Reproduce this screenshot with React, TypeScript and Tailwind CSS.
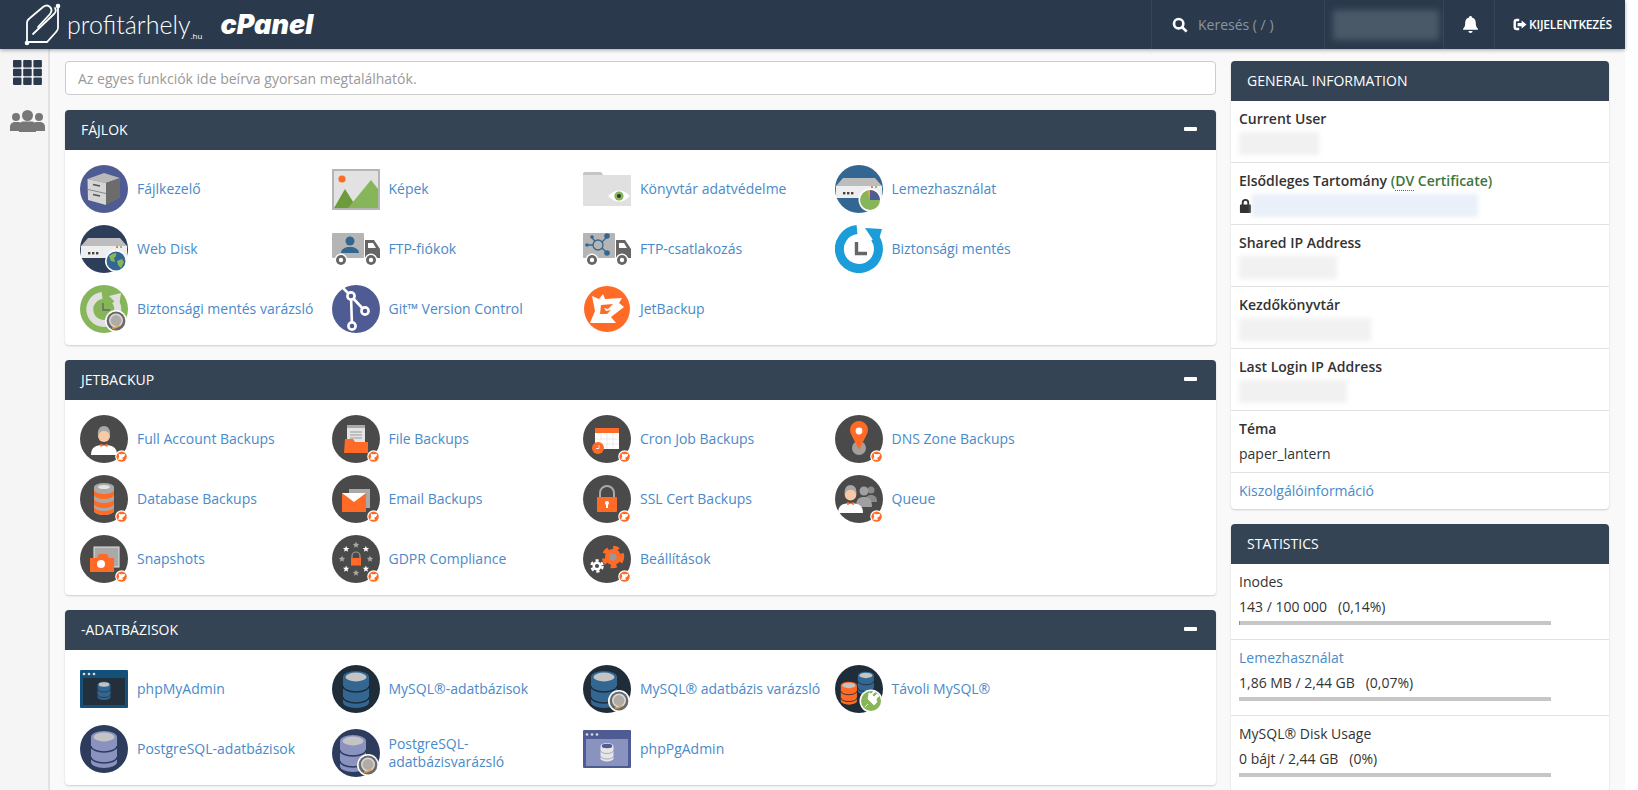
import type { ReactNode } from "react";

const ORANGE = "#ff6b26";
const DARK = "#4a4a4a";
const NAVY = "#1f2d3a";
const BLUE = "#336791";
const PURPLE = "#4f5b93";
const GREEN = "#87b55a";

function Icon({ children }: { children: ReactNode }) {
  return (
    <svg viewBox="0 0 48 48" className="w-12 h-12 shrink-0">
      {children}
    </svg>
  );
}

function Disc({ color }: { color: string }) {
  return <circle cx="24" cy="24" r="24" fill={color} />;
}

function JetBadge() {
  return (
    <g>
      <circle cx="41.6" cy="41.6" r="6.4" fill="#fff" />
      <circle cx="41.6" cy="41.6" r="5.2" fill={ORANGE} />
      <path d="M38 44.8l1.2-3.4-.6-3 2 .9 4.6-.3-.7 2.3-2.4 1.7 1.1 1.8z" fill="#fff" />
    </g>
  );
}

function HeadsetBadge() {
  return (
    <g>
      <circle cx="36" cy="36" r="11" fill="#fff" />
      <circle cx="36" cy="36" r="9.4" fill="#6a6a6a" />
      <circle cx="36" cy="35.5" r="6.2" fill="#b0aca5" stroke="#d9d9d9" strokeWidth="1.5" />
      <path d="M32 43q5 0 7-3" fill="none" stroke="#e8a33d" strokeWidth="1.6" />
    </g>
  );
}

function Server({ top = "#bdbdbd" }: { top?: string }) {
  return (
    <g>
      <path d="M8 13h32l7 8H1z" fill={top} />
      <rect x="1" y="21" width="46" height="12" fill="#eee" />
      <rect x="8" y="27" width="2.4" height="2.4" fill="#444" />
      <rect x="12" y="27" width="2.4" height="2.4" fill="#444" />
      <rect x="16" y="27" width="2.4" height="2.4" fill="#444" />
      <circle cx="37" cy="22" r="1" fill="#e5533d" />
      <circle cx="41" cy="22" r="1" fill="#6db33f" />
    </g>
  );
}

function Cylinder({ body, cap, line }: { body: string; cap: string; line: string }) {
  return (
    <g>
      <path d="M11 12v25a13 6 0 0 0 26 0V12a13 6 0 0 0-26 0z" fill={body} />
      <ellipse cx="24" cy="12" rx="10.5" ry="4.4" fill={cap} />
      <path d="M11 21a13 6 0 0 0 26 0M11 32a13 6 0 0 0 26 0" fill="none" stroke={line} strokeWidth="1.4" />
    </g>
  );
}

function Truck({ children }: { children: ReactNode }) {
  return (
    <Icon>
      <rect x="0" y="8" width="32" height="25" rx="1" fill="#b5b5b5" />
      <path d="M33 15h9l6 9v9H33z" fill="#666" />
      <path d="M36 18h5l3 5h-8z" fill="#fff" />
      {children}
      <circle cx="9" cy="35" r="6.4" fill="#fff" />
      <circle cx="9" cy="35" r="5" fill="#666" />
      <circle cx="9" cy="35" r="2.2" fill="#fff" />
      <circle cx="39" cy="35" r="6.4" fill="#fff" />
      <circle cx="39" cy="35" r="5" fill="#666" />
      <circle cx="39" cy="35" r="2.2" fill="#fff" />
    </Icon>
  );
}

function Person() {
  return (
    <g>
      <path d="M11 40c0-8 5-10 13-10s13 2 13 10z" fill="#fff" />
      <circle cx="24" cy="21" r="6" fill="#f7c9a7" />
      <path d="M18 21c-1-7 2.5-10 6-10s7 3 6 10c-1-4-3.5-5-6-5s-5 1-6 5z" fill="#a8a8a8" />
      <path d="M20.5 28.5l3.5 1.5 3.5-1.5v3.5l-3.5-1.5-3.5 1.5z" fill={ORANGE} />
    </g>
  );
}

function Star({ cx, cy, fill }: { cx: number; cy: number; fill: string }) {
  const pts = Array.from({ length: 10 }, (_, i) => {
    const r = i % 2 === 0 ? 3.4 : 1.5;
    const a = (i * Math.PI) / 5 - Math.PI / 2;
    return `${cx + r * Math.cos(a)},${cy + r * Math.sin(a)}`;
  }).join(" ");
  return <polygon points={pts} fill={fill} />;
}

function Gear({ cx, cy, r, color, hole }: { cx: number; cy: number; r: number; color: string; hole: string }) {
  return (
    <g>
      <circle cx={cx} cy={cy} r={r + 1} fill="none" stroke={color} strokeWidth={r * 0.55} strokeDasharray={`${r * 0.7} ${r * 0.62}`} />
      <circle cx={cx} cy={cy} r={r} fill={color} />
      <circle cx={cx} cy={cy} r={r * 0.45} fill={hole} />
    </g>
  );
}

const icons: Record<string, ReactNode> = {
  files: (
    <Icon>
      <Disc color={PURPLE} />
      <path d="M7.5 14L24 8l16 5-14 5z" fill="#b9b9b9" />
      <path d="M26 18l14-5v20l-14 7z" fill="#6c6c6c" />
      <path d="M7.5 14L26 18v22L8 35z" fill="#d5d5d5" />
      <path d="M8 24.5l18 4" stroke="#8a8a8a" strokeWidth="1" />
      <path d="M13 19.5l7 1.5M13 29.5l7 1.5" stroke="#555" strokeWidth="1.6" />
    </Icon>
  ),
  images: (
    <Icon>
      <rect x="0" y="4" width="48" height="41" fill="#b5b5b5" />
      <rect x="2" y="6" width="44" height="37" rx="1" fill="#e2e2e2" />
      <circle cx="10" cy="14" r="3.6" fill={ORANGE} />
      <path d="M2 43l11-19 12 19z" fill="#6d9b3b" />
      <path d="M16 43l23-28 7 9v19z" fill={GREEN} />
    </Icon>
  ),
  privacy: (
    <Icon>
      <path d="M0 9a2 2 0 0 1 2-2h16l3 4H0z" fill="#c5c5c5" />
      <path d="M0 10h48v31H1a1 1 0 0 1-1-1z" fill="#e0e0e0" />
      <path d="M25 31q11-11 22 0-11 11-22 0z" fill="#fff" />
      <circle cx="36" cy="31" r="4.6" fill={GREEN} />
      <circle cx="36" cy="31" r="2" fill="#333" />
    </Icon>
  ),
  disk: (
    <Icon>
      <Disc color={BLUE} />
      <Server />
      <circle cx="35" cy="35" r="11.5" fill="#fff" />
      <circle cx="35" cy="35" r="10" fill={GREEN} />
      <path d="M35 35V25a10 10 0 0 1 10 10z" fill={PURPLE} />
      <path d="M35 35l-3-9.5a10 10 0 0 1 3-.5z" fill="#e8a33d" />
    </Icon>
  ),
  webdisk: (
    <Icon>
      <Disc color="#2c3e5a" />
      <Server />
      <circle cx="36" cy="36" r="11" fill="#fff" />
      <circle cx="36" cy="36" r="9.5" fill={BLUE} />
      <path d="M29 31q4-3 7-3 1 3-2 5l1 4-4-1zM37 36l5-2 2 3-3 6-3-3z" fill={GREEN} />
    </Icon>
  ),
  ftpUser: (
    <Truck>
      <circle cx="18" cy="16" r="4.5" fill={BLUE} />
      <path d="M9 28c0-4 4-5 6-6h6c2 1 6 2 6 6z" fill={BLUE} />
    </Truck>
  ),
  ftpConn: (
    <Truck>
      <g fill="none" stroke={BLUE} strokeWidth="1.3">
        <circle cx="15" cy="20" r="5" />
        <path d="M4 20h6M19 17l5-5M19 23l5 5M9 13l3 3" />
      </g>
      <g fill={BLUE}>
        <circle cx="4" cy="20" r="1.8" />
        <circle cx="24" cy="11" r="2.8" />
        <circle cx="24" cy="28" r="2.8" />
        <circle cx="9" cy="12" r="1.8" />
      </g>
    </Truck>
  ),
  backup: (
    <Icon>
      <path d="M22 4.6A19.5 19.5 0 1 0 40 13" fill="none" stroke="#1b9dd9" strokeWidth="9" />
      <polygon points="30,3 47,4 42,21" fill="#1b9dd9" />
      <path d="M21.5 17v11.5H32" fill="none" stroke="#666" strokeWidth="3.4" />
    </Icon>
  ),
  wizard: (
    <Icon>
      <Disc color={GREEN} />
      <path d="M22 10.5A14 14 0 1 0 35 16" fill="none" stroke="#e0e0e0" strokeWidth="7" />
      <polygon points="29,11 41,8 39,21" fill="#e0e0e0" />
      <path d="M23 18v7h7" fill="none" stroke="#666" strokeWidth="1.4" />
      <HeadsetBadge />
    </Icon>
  ),
  git: (
    <Icon>
      <Disc color={PURPLE} />
      <g stroke="#fff" strokeWidth="2.6" fill="none">
        <path d="M11 3l8 8 14 15M19 11l1 30" />
      </g>
      <g stroke="#fff" strokeWidth="2.6" fill={PURPLE}>
        <circle cx="19" cy="11" r="3.6" />
        <circle cx="33" cy="26" r="3.6" />
        <circle cx="20" cy="41" r="3.6" />
      </g>
    </Icon>
  ),
  jet: (
    <Icon>
      <circle cx="24" cy="24" r="23" fill={ORANGE} />
      <path d="M7 38l5-12-3-15 7 3 4-5 2 5 17-1-3 5 5 4-13 10 5 6z" fill="#fff" />
      <path d="M18 20l12-1-5 5-4-1 2 3 5-1-4 4h-7z" fill={ORANGE} />
    </Icon>
  ),
  fullBackup: (
    <Icon>
      <Disc color={DARK} />
      <Person />
      <JetBadge />
    </Icon>
  ),
  fileBackup: (
    <Icon>
      <Disc color={DARK} />
      <rect x="15" y="10" width="18" height="5" fill="#aaa" />
      <rect x="15" y="13" width="18" height="16" fill="#e4e4e4" />
      <path d="M18 17h12M18 20h12M18 23h12" stroke="#999" />
      <path d="M13 24h8l2 3h13v11H12z" fill={ORANGE} />
      <JetBadge />
    </Icon>
  ),
  cronBackup: (
    <Icon>
      <Disc color={DARK} />
      <rect x="12" y="13" width="24" height="21" fill="#fff" />
      <rect x="12" y="13" width="24" height="5" fill={ORANGE} />
      <path d="M12 24h24M12 29h24M18 18v16M24 18v16M30 18v16" stroke="#ddd" strokeWidth=".6" />
      <circle cx="15" cy="33" r="6" fill={ORANGE} />
      <path d="M16 30v3.5h-3" fill="none" stroke="#fff" strokeWidth=".8" />
      <JetBadge />
    </Icon>
  ),
  dnsBackup: (
    <Icon>
      <Disc color={DARK} />
      <circle cx="24" cy="33" r="7" fill="#a0a0a0" />
      <path d="M24 35L16.5 20a9 9 0 1 1 15 0z" fill={ORANGE} />
      <circle cx="24" cy="16" r="3.4" fill="#fff" />
      <JetBadge />
    </Icon>
  ),
  dbBackup: (
    <Icon>
      <Disc color={DARK} />
      <path d="M14 12a10 4 0 0 1 20 0v24a10 4 0 0 1-20 0z" fill="#a9a9a9" />
      <ellipse cx="24" cy="12" rx="6" ry="2" fill="#e4e4e4" />
      <path d="M14 15a10 4 0 0 0 20 0v5a10 4 0 0 1-20 0zM14 24a10 4 0 0 0 20 0v5a10 4 0 0 1-20 0zM14 32a10 4 0 0 0 20 0v4a10 4 0 0 1-20 0z" fill={ORANGE} />
      <JetBadge />
    </Icon>
  ),
  emailBackup: (
    <Icon>
      <Disc color={DARK} />
      <rect x="17" y="14" width="21" height="19" fill="#a9a9a9" />
      <rect x="10" y="18" width="24" height="19" fill={ORANGE} />
      <path d="M10 18h24L22 27z" fill="#fff" />
      <JetBadge />
    </Icon>
  ),
  sslBackup: (
    <Icon>
      <Disc color={DARK} />
      <path d="M17 24v-6a7 7 0 0 1 14 0v6" fill="none" stroke="#a9a9a9" strokeWidth="2" />
      <rect x="14" y="22" width="20" height="15" rx="1" fill={ORANGE} />
      <circle cx="24" cy="28" r="2" fill="#fff" />
      <rect x="23" y="28" width="2" height="5" fill="#fff" />
      <JetBadge />
    </Icon>
  ),
  queue: (
    <Icon>
      <Disc color={DARK} />
      <circle cx="36" cy="15" r="3.5" fill="#8a8a8a" />
      <path d="M30 27c0-5 2-7 6-7s6 2 6 7z" fill="#8a8a8a" />
      <circle cx="29" cy="16" r="4.5" fill="#a0a0a0" />
      <path d="M21 32c0-8 3-10 8-10s8 2 8 10z" fill="#a0a0a0" />
      <g transform="translate(-7.5 -.5) scale(.96)">
        <Person />
      </g>
      <JetBadge />
    </Icon>
  ),
  snapshot: (
    <Icon>
      <Disc color={DARK} />
      <rect x="14" y="12" width="25" height="20" fill="#a9a9a9" stroke="#e4e4e4" strokeWidth="1" />
      <path d="M10 23h7l2-4h8l2 4h5v14H10z" fill={ORANGE} />
      <circle cx="21" cy="29" r="4" fill="#fff" />
      <JetBadge />
    </Icon>
  ),
  gdpr: (
    <Icon>
      <Disc color={DARK} />
      {Array.from({ length: 8 }, (_, i) => {
        const a = (i * Math.PI) / 4 - Math.PI / 2;
        return <Star key={i} cx={24 + 14 * Math.cos(a)} cy={24 + 14 * Math.sin(a)} fill={i % 2 === 0 ? "#a9a9a9" : "#fff"} />;
      })}
      <path d="M20 24v-3a4 4 0 0 1 8 0v3" fill="none" stroke="#999" strokeWidth="1.2" />
      <rect x="19" y="23" width="10" height="7.5" fill={ORANGE} />
      <JetBadge />
    </Icon>
  ),
  settings: (
    <Icon>
      <Disc color={DARK} />
      <Gear cx={30} cy={22} r={8} color={ORANGE} hole="#999" />
      <Gear cx={14} cy={31} r={4.5} color="#fff" hole={DARK} />
      <JetBadge />
    </Icon>
  ),
  phpMyAdmin: (
    <Icon>
      <rect x="0" y="5" width="48" height="38" rx="1" fill="#14507a" />
      <rect x="3" y="13" width="42" height="27" fill="#23303b" />
      <circle cx="4" cy="9" r="1.3" fill="#ddd" />
      <circle cx="9" cy="9" r="1.3" fill="#ddd" />
      <circle cx="14" cy="9" r="1.3" fill="#ddd" />
      <g transform="translate(12 13.5) scale(.5)">
        <Cylinder body={BLUE} cap="#c4c4c4" line="#23303b" />
      </g>
    </Icon>
  ),
  mysql: (
    <Icon>
      <Disc color={NAVY} />
      <Cylinder body={BLUE} cap="#c4c4c4" line={NAVY} />
    </Icon>
  ),
  mysqlWizard: (
    <Icon>
      <Disc color={NAVY} />
      <g transform="translate(-3 0)">
        <Cylinder body={BLUE} cap="#c4c4c4" line={NAVY} />
      </g>
      <HeadsetBadge />
    </Icon>
  ),
  remoteMysql: (
    <Icon>
      <Disc color={NAVY} />
      <g transform="translate(16 3) scale(.62)">
        <Cylinder body={BLUE} cap="#c4c4c4" line={NAVY} />
      </g>
      <g transform="translate(-1 13) scale(.62)">
        <Cylinder body={ORANGE} cap="#c4c4c4" line={NAVY} />
      </g>
      <circle cx="36" cy="36" r="11.5" fill="#fff" />
      <circle cx="36" cy="36" r="10" fill={GREEN} />
      <path d="M30 42l3-3M33 34l6 6 3-3-1-3 3-3-2-2-3 3-2-2 3-3-1-1-3 3-2-1z" fill="#fff" stroke="#fff" strokeWidth=".8" />
    </Icon>
  ),
  pgsql: (
    <Icon>
      <Disc color="#2d3b5c" />
      <Cylinder body="#8a93c0" cap="#c4c4c4" line="#2d3b5c" />
    </Icon>
  ),
  pgWizard: (
    <Icon>
      <Disc color="#2d3b5c" />
      <g transform="translate(-3 0)">
        <Cylinder body="#8a93c0" cap="#c4c4c4" line="#2d3b5c" />
      </g>
      <HeadsetBadge />
    </Icon>
  ),
  phpPgAdmin: (
    <Icon>
      <rect x="0" y="5" width="48" height="38" rx="1" fill={PURPLE} />
      <rect x="3" y="14" width="42" height="27" fill="#8a93c0" />
      <circle cx="4" cy="9.5" r="1.3" fill="#ddd" />
      <circle cx="9" cy="9.5" r="1.3" fill="#ddd" />
      <circle cx="14" cy="9.5" r="1.3" fill="#ddd" />
      <g transform="translate(12 15) scale(.5)">
        <Cylinder body="#e6e6e6" cap={PURPLE} line="#8a93c0" />
      </g>
    </Icon>
  ),
};

type Tool = { icon: string; label: string; low?: boolean };

const groups: { title: string; tools: Tool[] }[] = [
  {
    title: "Fájlok",
    tools: [
      { icon: "files", label: "Fájlkezelő" },
      { icon: "images", label: "Képek" },
      { icon: "privacy", label: "Könyvtár adatvédelme" },
      { icon: "disk", label: "Lemezhasználat" },
      { icon: "webdisk", label: "Web Disk" },
      { icon: "ftpUser", label: "FTP-fiókok" },
      { icon: "ftpConn", label: "FTP-csatlakozás" },
      { icon: "backup", label: "Biztonsági mentés" },
      { icon: "wizard", label: "Biztonsági mentés varázsló" },
      { icon: "git", label: "Git™ Version Control" },
      { icon: "jet", label: "JetBackup" },
    ],
  },
  {
    title: "JetBackup",
    tools: [
      { icon: "fullBackup", label: "Full Account Backups" },
      { icon: "fileBackup", label: "File Backups" },
      { icon: "cronBackup", label: "Cron Job Backups" },
      { icon: "dnsBackup", label: "DNS Zone Backups" },
      { icon: "dbBackup", label: "Database Backups" },
      { icon: "emailBackup", label: "Email Backups" },
      { icon: "sslBackup", label: "SSL Cert Backups" },
      { icon: "queue", label: "Queue" },
      { icon: "snapshot", label: "Snapshots" },
      { icon: "gdpr", label: "GDPR Compliance" },
      { icon: "settings", label: "Beállítások" },
    ],
  },
  {
    title: "-Adatbázisok",
    tools: [
      { icon: "phpMyAdmin", label: "phpMyAdmin" },
      { icon: "mysql", label: "MySQL®-adatbázisok" },
      { icon: "mysqlWizard", label: "MySQL® adatbázis varázsló" },
      { icon: "remoteMysql", label: "Távoli MySQL®" },
      { icon: "pgsql", label: "PostgreSQL-adatbázisok" },
      { icon: "pgWizard", label: "PostgreSQL-adatbázisvarázsló", low: true },
      { icon: "phpPgAdmin", label: "phpPgAdmin" },
    ],
  },
];

function Header() {
  return (
    <header className="relative z-10 flex h-[49px] w-[1625px] shrink-0 items-center bg-[#2a3a4c] shadow-[0_1px_4px_rgba(0,0,0,0.35)]">
      {/* Logo */}
      <svg viewBox="0 0 40 44" className="ml-[24px] h-[44px] w-[40px] shrink-0 text-white" fill="none" stroke="currentColor" strokeWidth="1.8" strokeLinecap="round">
        <path d="M3 39V20q0-3 3-5L19 4q4-3 7 0t0 7L14 24" />
        <path d="M9 31l21-20q3-3 1-6" />
        <path d="M34 3v22q0 2-2 4l-9 10H3" />
        <circle cx="3" cy="40" r="1.4" fill="currentColor" />
        <circle cx="34" cy="3" r="1.4" fill="currentColor" />
      </svg>
      <span className="ml-[3px] text-[25px] leading-none font-light text-white font-['Lato',sans-serif]">profitárhely</span>
      <span className="mt-[22px] text-[8px] leading-none text-white">.hu</span>
      <span className="ml-[18px] text-[27px] leading-none font-black italic text-white font-['Inter',sans-serif]">cPanel</span>

      <div className="ml-auto flex h-full w-[173px] items-center border-l border-[#36475a] pl-[20px]">
        <svg viewBox="0 0 24 24" className="h-[16px] w-[16px] text-white" fill="none" stroke="currentColor" strokeWidth="4">
          <circle cx="10" cy="10" r="7" />
          <path d="M15 15l7 7" />
        </svg>
        <span className="ml-[10px] text-[14px] text-[#8a95a1]">Keresés ( / )</span>
      </div>
      <div className="flex h-full w-[119px] items-center border-l border-[#36475a] pl-[8px]">
        <div className="h-[30px] w-[106px] bg-[#4a5968] blur-[3px]" />
      </div>
      <div className="flex h-full w-[51px] items-center justify-center border-l border-[#36475a] pl-[3px]">
        <svg viewBox="0 0 24 24" className="h-[17px] w-[17px] text-white" fill="currentColor">
          <path d="M12 0a2 2 0 0 1 2 2.2c4 .8 5.5 4 5.5 8 0 4 1 5.8 3 7.8v1.500h-21V18c2-2 3-3.8 3-7.8s1.500-7.200 5.500-8A2 2 0 0 1 12 0zM9 21h6a3 3 0 0 1-6 0z" />
        </svg>
      </div>
      <div className="flex h-full w-[131px] items-center border-l border-[#36475a] pl-[18px]">
        <svg viewBox="0 0 16 16" className="h-[13px] w-[14px] text-white" fill="currentColor">
          <path d="M7 1H4a4 4 0 0 0-4 4v6a4 4 0 0 0 4 4h3v-3H4a1 1 0 0 1-1-1V5a1 1 0 0 1 1-1h3z" />
          <path d="M10 3l6 5-6 5v-3H5V6h5z" />
        </svg>
        <span className="ml-[2px] text-[12px] font-semibold tracking-[-0.2px] text-white">KIJELENTKEZÉS</span>
      </div>
    </header>
  );
}

function Sidebar() {
  return (
    <aside className="flex w-[50px] shrink-0 flex-col items-center border-r-2 border-[#e2e2e2] bg-[#f5f5f5] pl-[6px] pt-[11px]">
      <svg viewBox="0 0 29 25" className="h-[25px] w-[29px]" fill="#2a3a4c">
        {[0, 1, 2].flatMap((r) =>
          [0, 1, 2].map((c) => <rect key={`${r}${c}`} x={c * 10.2} y={r * 8.7} width="8.5" height="7.6" rx="1" />),
        )}
      </svg>
      <svg viewBox="0 0 35 22" className="mt-[25px] h-[22px] w-[35px]" fill="#777">
        <circle cx="6" cy="7" r="4" />
        <path d="M0 21v-4q0-4 4-5h5l2 1v8z" />
        <circle cx="29" cy="7" r="4" />
        <path d="M35 21v-4q0-4-4-5h-5l-2 1v8z" />
        <circle cx="17.5" cy="5.5" r="5.5" />
        <path d="M9 22v-6q0-4 4-4.500h9q4 .5 4 4.500v6z" />
      </svg>
    </aside>
  );
}

function ToolGroup({ title, tools }: { title: string; tools: Tool[] }) {
  return (
    <section className="mt-[15px] overflow-hidden rounded-[4px] bg-white shadow-[0_1px_2px_rgba(0,0,0,0.18)]">
      <div className="flex h-[40px] items-center justify-between bg-[#344454] pb-[2px] pl-[16px] pr-[19px]">
        <h2 className="text-[14px] font-normal uppercase text-white">{title}</h2>
        <span className="h-[4px] w-[13px] rounded-[1px] bg-white" />
      </div>
      <div className="grid grid-cols-[repeat(4,251.5px)] gap-y-3 px-[15px] pt-[15px] pb-3">
        {tools.map((t) => (
          <a key={t.label} className={`flex h-12 items-center gap-[9px] text-[14px] leading-[18px] text-[#4a8ac9] ${t.low ? "translate-y-1" : ""}`}>
            {icons[t.icon]}
            <span className="w-[186px]">{t.label}</span>
          </a>
        ))}
      </div>
    </section>
  );
}

function Redacted({ w, tone = "bg-[#f1f1f1]" }: { w: string; tone?: string }) {
  return <div className={`my-px h-[23px] ${w} ${tone} blur-[2px]`} />;
}

function InfoRow({ label, children }: { label: ReactNode; children: ReactNode }) {
  return (
    <div className="border-b border-[#e2e2e2] pl-2 pr-2 pt-[5px] pb-[6px] text-[14px] leading-[25px] text-[#333]">
      <div className="font-semibold">{label}</div>
      {children}
    </div>
  );
}

function StatRow({ label, value, link, fill }: { label: string; value: string; link?: boolean; fill?: boolean }) {
  return (
    <div className="h-[76px] border-b border-[#e2e2e2] pl-2 pt-[5px] text-[14px] leading-[25px] text-[#333]">
      <div className={link ? "text-[#4a8ac9]" : ""}>{label}</div>
      <div className="whitespace-pre">{value}</div>
      <div className="mt-[2px] flex h-[4px] w-[312px] bg-[#c6c6c6]">
        {fill && <span className="w-px bg-[#5cb85c]" />}
      </div>
    </div>
  );
}

function SideCard({ title, children }: { title: string; children: ReactNode }) {
  return (
    <section className="overflow-hidden rounded-[4px] bg-white shadow-[0_1px_2px_rgba(0,0,0,0.18)]">
      <div className="flex h-[40px] items-center bg-[#344454] pb-[2px] pl-[16px] text-[14px] uppercase text-white">{title}</div>
      {children}
    </section>
  );
}

export default function App() {
  return (
    <div className="h-[790px] w-[1638px] overflow-hidden bg-white font-['Open_Sans',sans-serif]">
      <div className="flex h-[790px] w-[1625px] flex-col bg-[#f9f9f9]">
        <Header />
        <div className="flex flex-1">
          <Sidebar />
          <main className="flex gap-[15px] pl-[15px] pt-[12px]">
            <div className="w-[1151px]">
              <input
                placeholder="Az egyes funkciók ide beírva gyorsan megtalálhatók."
                className="h-[34px] w-full rounded-[4px] border border-[#ccc] bg-white px-[12px] text-[14px] placeholder:text-[#999]"
              />
              {groups.map((g) => (
                <ToolGroup key={g.title} title={g.title} tools={g.tools} />
              ))}
            </div>

            <div className="flex w-[378px] flex-col gap-[15px]">
              <SideCard title="General Information">
                <InfoRow label="Current User">
                  <Redacted w="w-[80px]" />
                </InfoRow>
                <InfoRow
                  label={
                    <>
                      Elsődleges Tartomány{" "}
                      <span className="text-[#3c763d]">
                        (<span className="border-b border-dotted border-[#3c763d]">DV</span> Certificate)
                      </span>
                    </>
                  }
                >
                  <div className="flex items-center">
                    <svg viewBox="0 0 14 16" className="h-[15px] w-[13px] shrink-0" fill="#333">
                      <path d="M3 7V5a4 4 0 0 1 8 0v2h1a1 1 0 0 1 1 1v7a1 1 0 0 1-1 1H2a1 1 0 0 1-1-1V8a1 1 0 0 1 1-1zm2 0h4V5a2 2 0 0 0-4 0z" />
                    </svg>
                    <Redacted w="w-[226px]" tone="bg-[#e9f0f9]" />
                  </div>
                </InfoRow>
                <InfoRow label="Shared IP Address">
                  <Redacted w="w-[98px]" />
                </InfoRow>
                <InfoRow label="Kezdőkönyvtár">
                  <Redacted w="w-[132px]" />
                </InfoRow>
                <InfoRow label="Last Login IP Address">
                  <Redacted w="w-[108px]" />
                </InfoRow>
                <InfoRow label="Téma">paper_lantern</InfoRow>
                <div className="pl-2 pt-[5px] pb-[6px] text-[14px] leading-[25px] text-[#4a8ac9]">Kiszolgálóinformáció</div>
              </SideCard>

              <SideCard title="Statistics">
                <StatRow label="Inodes" value="143 / 100 000   (0,14%)" fill />
                <StatRow label="Lemezhasználat" value="1,86 MB / 2,44 GB   (0,07%)" link />
                <StatRow label="MySQL® Disk Usage" value="0 bájt / 2,44 GB   (0%)" />
              </SideCard>
            </div>
          </main>
        </div>
      </div>
    </div>
  );
}
